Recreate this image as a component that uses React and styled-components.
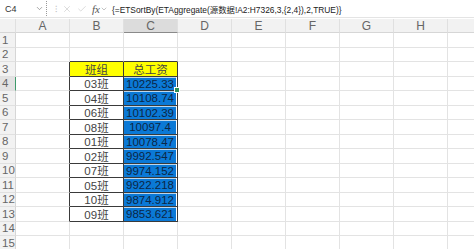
import React from 'react';
import styled, { createGlobalStyle } from 'styled-components';
import { ChevronDown, X, Check } from 'lucide-react';

const Global = createGlobalStyle`
  html, body { margin: 0; padding: 0; background: #fff; }
  body { font-family: "Liberation Sans", "Noto Sans CJK SC", sans-serif; overflow: hidden; }
`;

const COLS = ['A', 'B', 'C', 'D', 'E', 'F', 'G', 'H', ''];
const ROW_COUNT = 15;

const data = [
    ['03班', '10225.33'],
    ['04班', '10108.74'],
    ['06班', '10102.39'],
    ['08班', '10097.4'],
    ['01班', '10078.47'],
    ['02班', '9992.547'],
    ['07班', '9974.152'],
    ['05班', '9922.218'],
    ['10班', '9874.912'],
    ['09班', '9853.621'],
];

const Page = styled.div`
    width: 474px;
    height: 249px;
    overflow: hidden;
    background: #fff;
`;

const FormulaBar = styled.div`
    display: flex;
    align-items: center;
    height: 17px;
    border-bottom: 1px solid #e4e4e4;
    color: #333;
`;

const NameBox = styled.div`
    display: flex;
    align-items: center;
    justify-content: space-between;
    width: 46px;
    padding: 0 2px 0 5px;
    font-size: 9px;
    box-sizing: border-box;
`;

const Sep = styled.div`
    width: 1px;
    height: 15px;
    border-left: 1px dotted #999;
    margin: 0 4px 0 0;
`;

const Tools = styled.div`
    display: flex;
    align-items: center;
    gap: 5px;
    color: #b8b8b8;
    padding: 0 3px 0 3px;
`;

const Dots = styled.span`
    font-size: 9px;
    color: #c0c0c0;
`;

const Fx = styled.span`
    font-family: "Liberation Serif", serif;
    font-style: italic;
    font-size: 11px;
    color: #555;
    display: flex;
    align-items: center;
`;

const FormulaText = styled.div`
    font-family: "Liberation Sans", "Noto Sans CJK SC", sans-serif;
    font-size: 8.4px;
    color: #222;
    white-space: nowrap;
    padding-left: 1px;
`;

const Sheet = styled.div`
    display: grid;
    grid-template-columns: 16px repeat(9, 54px);
    grid-template-rows: 14px repeat(${ROW_COUNT}, 14.5px);
    margin-top: 1px;
`;

const ColHead = styled.div`
    background: ${p => (p.$active ? '#dcdcdc' : '#f2f2f2')};
    border-right: 1px solid #e0e0e0;
    border-bottom: 1px solid ${p => (p.$active ? '#8a8a8a' : '#d6d6d6')};
    color: #666;
    font-size: 12px;
    display: flex;
    align-items: center;
    justify-content: center;
    box-sizing: border-box;
`;

const Corner = styled(ColHead)`
    background: #f2f2f2;
`;

const RowHead = styled.div`
    background: ${p => (p.$active ? '#e2e2e2' : '#f2f2f2')};
    border-right: 1px solid ${p => (p.$active ? '#3f9a6b' : '#d6d6d6')};
    border-bottom: 1px solid #e0e0e0;
    color: #666;
    font-size: 11.5px;
    display: flex;
    align-items: center;
    padding-left: 2px;
    box-sizing: border-box;
`;

const Cell = styled.div`
    position: relative;
    box-sizing: border-box;
    border-right: 1px solid ${p => (p.$darkRight ? '#3a3a3a' : '#e3e3e3')};
    border-bottom: 1px solid ${p => (p.$darkBottom ? '#3a3a3a' : '#e3e3e3')};
    background: ${p => p.$fill || '#fff'};
    color: #444;
    font-size: 11.5px;
    display: flex;
    align-items: center;
    justify-content: center;
    white-space: nowrap;
`;

const BlueFill = styled.div`
    position: absolute;
    inset: 0 1px 0 0;
    background: #0b79d6;
    border-top: 1px solid #bcd6ec;
    display: flex;
    align-items: center;
    justify-content: center;
    color: #0c2746;
    font-size: 11.5px;
`;

const Handle = styled.div`
    position: absolute;
    right: -3px;
    bottom: -3px;
    width: 4px;
    height: 4px;
    background: #2f8f5a;
    border: 1px solid #fff;
    z-index: 2;
`;

function inTable(r, c) {
    return r >= 3 && r <= 13 && c >= 1 && c <= 2;
}

function cellContent(r, c) {
    if (r === 3 && c === 1) return '班组';
    if (r === 3 && c === 2) return '总工资';
    if (r >= 4 && r <= 13 && c === 1) return data[r - 4][0];
    return null;
}

class App extends React.Component {
    renderCell(r, c) {
        const darkRight = inTable(r, c) || inTable(r, c + 1);
        const darkBottom = inTable(r, c) || inTable(r + 1, c);
        const yellow = r === 3 && (c === 1 || c === 2);
        const blue = r >= 4 && r <= 13 && c === 2;
        return (
            <Cell
                key={`${r}-${c}`}
                $darkRight={darkRight}
                $darkBottom={darkBottom}
                $fill={yellow ? '#ffff00' : null}
            >
                {blue ? <BlueFill>{data[r - 4][1]}</BlueFill> : cellContent(r, c)}
                {blue && r === 4 && <Handle />}
            </Cell>
        );
    }

    render() {
        const rows = [];
        for (let r = 1; r <= ROW_COUNT; r++) {
            rows.push(<RowHead key={`h${r}`} $active={r === 4}>{r}</RowHead>);
            COLS.forEach((_, c) => rows.push(this.renderCell(r, c)));
        }
        return (
            <Page>
                <Global />
                <FormulaBar>
                    <NameBox>
                        <span>C4</span>
                        <ChevronDown size={9} strokeWidth={1.5} color="#666" />
                    </NameBox>
                    <Sep />
                    <Tools>
                        <Dots>⁝</Dots>
                        <X size={10} strokeWidth={1.2} />
                        <Check size={10} strokeWidth={1.2} />
                        <Fx>fx<ChevronDown size={8} strokeWidth={1.5} color="#888" /></Fx>
                    </Tools>
                    <FormulaText>{'{=ETSortBy(ETAggregate(源数据!A2:H7326,3,{2,4}),2,TRUE)}'}</FormulaText>
                </FormulaBar>
                <Sheet>
                    <Corner />
                    {COLS.map((col, i) => (
                        <ColHead key={i} $active={col === 'C'}>{col}</ColHead>
                    ))}
                    {rows}
                </Sheet>
            </Page>
        );
    }
}

export default App;
